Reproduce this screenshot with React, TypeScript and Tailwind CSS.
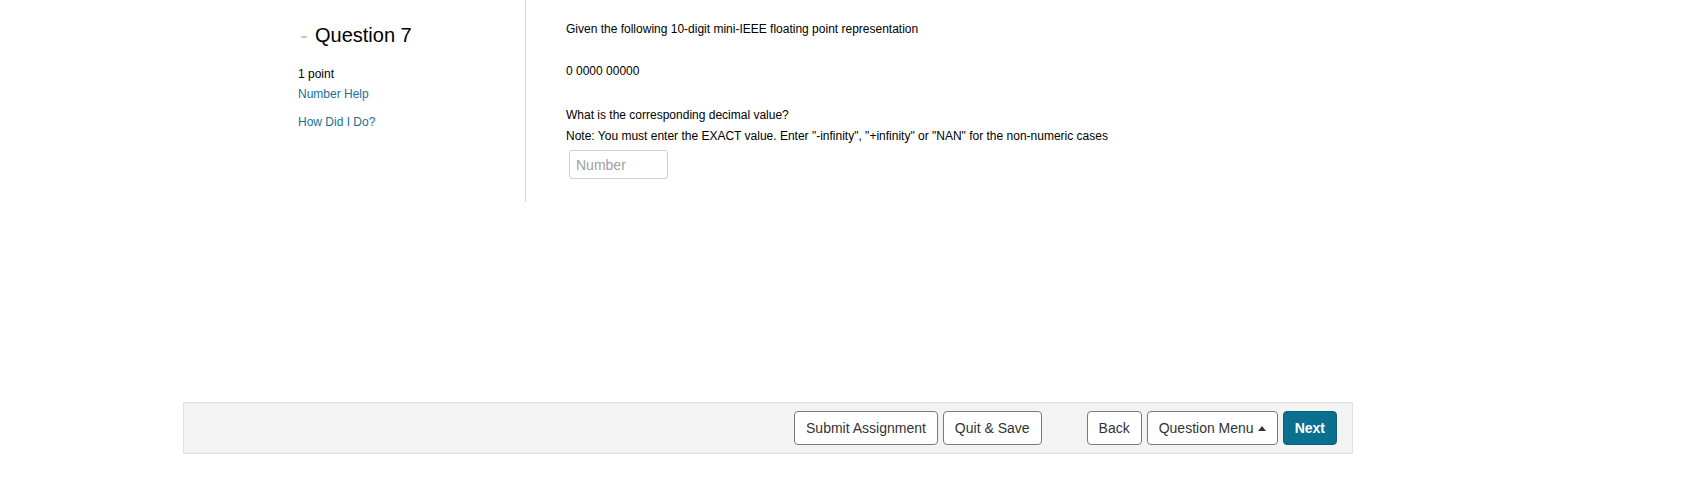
import { useState } from "react";

const Btn = ({ children, primary = false }: { children: React.ReactNode; primary?: boolean }) => (
  <button
    className={
      primary
        ? "h-[34px] px-[11px] rounded-[4px] border border-[#0a5f7a] bg-[#0b6f8f] text-white text-[14px] font-bold"
        : "h-[34px] px-[11px] rounded-[4px] border border-[#7a7a7a] bg-white text-[#333] text-[14px]"
    }>
    {children}
  </button>
);

export default function App() {
  const [value, setValue] = useState("");

  return (
    <div className="w-full h-[481px] bg-white font-['Liberation_Sans',Arial,sans-serif] text-black">
      <div className="ml-[183px] w-[1170px]">
        {/* question area */}
        <div className="flex h-[202px]">
          <div className="w-[343px] pl-[115px] border-r border-[#d6d6d6]">
            <h2 className="mt-[23px] flex items-center text-[20px] leading-[25px]">
              <span className="block w-[6px] h-[2px] bg-[#c8c8c8] ml-[3px] mr-[8px] mt-[2px]" />
              Question 7
            </h2>
            <div className="mt-[16px] text-[12px] leading-[20px]">1 point</div>
            <a className="block text-[12px] leading-[20px] text-[#1a6f97]">Number Help</a>
            <a className="block mt-[8px] text-[12px] leading-[20px] text-[#1a6f97]">How Did I Do?</a>
          </div>

          <div className="pl-[40px] text-[12px] leading-[20px]">
            <p className="mt-[19px]">Given the following 10-digit mini-IEEE floating point representation</p>
            <p className="mt-[22px]">0 0000 00000</p>
            <p className="mt-[23px] leading-[22px]">What is the corresponding decimal value?</p>
            <p className="leading-[21px]">Note: You must enter the EXACT value. Enter "-infinity", "+infinity" or "NAN" for the non-numeric cases</p>
            <input
              value={value}
              onChange={(e) => setValue(e.target.value)}
              placeholder="Number"
              className="mt-[3px] ml-[3px] w-[99px] h-[29px] px-[6px] rounded-[3px] border border-[#cfcfcf] text-[14px] placeholder:text-[#a0a0a0] outline-none"
            />
          </div>
        </div>

        {/* footer bar */}
        <div className="mt-[200px] h-[52px] flex items-center justify-end pr-[15px] bg-[#f3f3f3] border border-[#e0e0e0]">
          <div className="flex gap-[5px]">
            <Btn>Submit Assignment</Btn>
            <Btn>Quit &amp; Save</Btn>
          </div>
          <div className="flex gap-[5px] ml-[45px]">
            <Btn>Back</Btn>
            <Btn>
              <span className="flex items-center gap-[4px]">
                Question Menu
                <svg width="8" height="5" viewBox="0 0 8 5">
                  <path d="M0 5 L4 0 L8 5 Z" fill="#333" />
                </svg>
              </span>
            </Btn>
            <Btn primary>Next</Btn>
          </div>
        </div>
      </div>
    </div>
  );
}
